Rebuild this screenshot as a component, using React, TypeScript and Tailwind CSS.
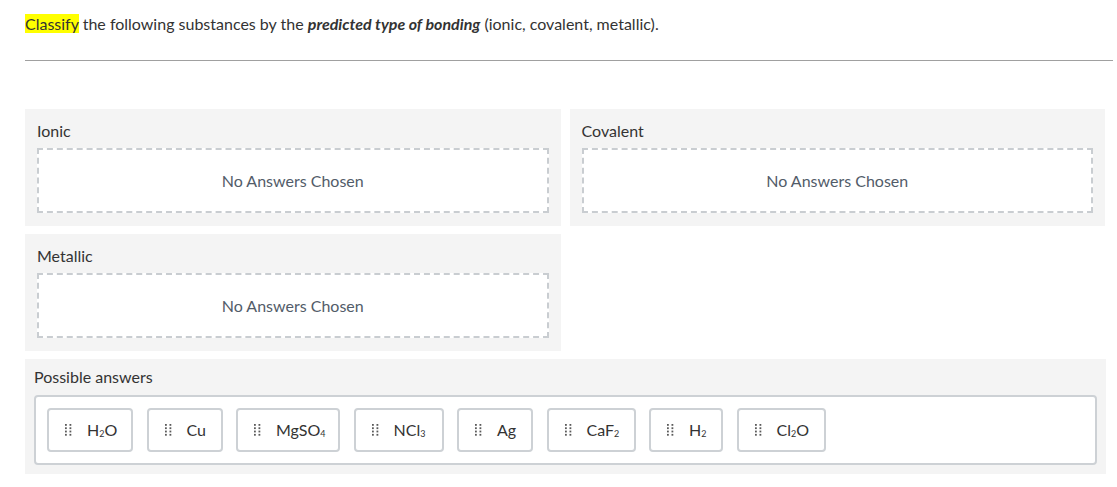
import React from "react";

const font = { fontFamily: "Lato, 'Noto Sans', sans-serif" };

function Grip() {
  return (
    <svg width="7" height="12" viewBox="0 0 7 12" className="shrink-0">
      {[0, 1, 2, 3].map((r) =>
        [0, 1].map((c) => (
          <rect key={`${r}-${c}`} x={c * 4.5} y={r * 3.3} width="1.8" height="1.8" fill="#5a5a5a" />
        ))
      )}
    </svg>
  );
}

function Sub({ children }: { children: React.ReactNode }) {
  return <sub className="text-[9px] -bottom-[1px]">{children}</sub>;
}

const chips: { w: number; label: React.ReactNode }[] = [
  { w: 86, label: <>H<Sub>2</Sub>O</> },
  { w: 76, label: <>Cu</> },
  { w: 104, label: <>MgSO<Sub>4</Sub></> },
  { w: 90, label: <>NCl<Sub>3</Sub></> },
  { w: 76, label: <>Ag</> },
  { w: 89, label: <>CaF<Sub>2</Sub></> },
  { w: 74, label: <>H<Sub>2</Sub></> },
  { w: 89, label: <>Cl<Sub>2</Sub>O</> },
];

function Bucket({ title }: { title: string }) {
  return (
    <div className="bg-[#f4f4f4] px-[12px] pt-[11px] pb-[13px]">
      <div className="text-[16px] leading-[22px] text-[#333333] mb-[6px]">{title}</div>
      <div className="h-[65px] bg-white border-2 border-dashed border-[#c9cdd1] flex items-center justify-center">
        <span className="text-[16px] text-[#525c69]">No Answers Chosen</span>
      </div>
    </div>
  );
}

export default function App() {
  return (
    <div className="min-h-[487px] bg-white pl-[25px] pr-[4px] pt-[13px]" style={font}>
      <p className="text-[16px] leading-[22px] text-[#333333]">
        <span className="bg-[#ffff00]">Classify</span> the following substances by the{" "}
        <b className="italic font-bold">predicted type of bonding</b> (ionic, covalent, metallic).
      </p>
      <div className="mt-[25px] border-t border-[#a0a0a0]" />
      <div className="mt-[48px] w-[1080px] grid grid-cols-2 gap-x-[9px] gap-y-[8px]">
        <Bucket title="Ionic" />
        <Bucket title="Covalent" />
        <Bucket title="Metallic" />
        <div />
        <div className="col-span-2 w-[1081px] bg-[#f4f4f4] pl-[9px] pr-[9px] pt-[7px] pb-[9px]">
          <div className="text-[16px] leading-[22px] text-[#333333] mb-[7px]">Possible answers</div>
          <div className="h-[70px] bg-white border-2 border-[#cdd1d5] rounded-[4px] px-[11px] flex items-center gap-[13.5px]">
            {chips.map((c, i) => (
              <div
                key={i}
                style={{ width: c.w }}
                className="h-[44px] shrink-0 border-2 border-[#cdd1d5] rounded-[4px] flex items-center pl-[16px]"
              >
                <Grip />
                <span className="ml-[15px] text-[16px] text-[#333333] leading-none">{c.label}</span>
              </div>
            ))}
          </div>
        </div>
      </div>
    </div>
  );
}
